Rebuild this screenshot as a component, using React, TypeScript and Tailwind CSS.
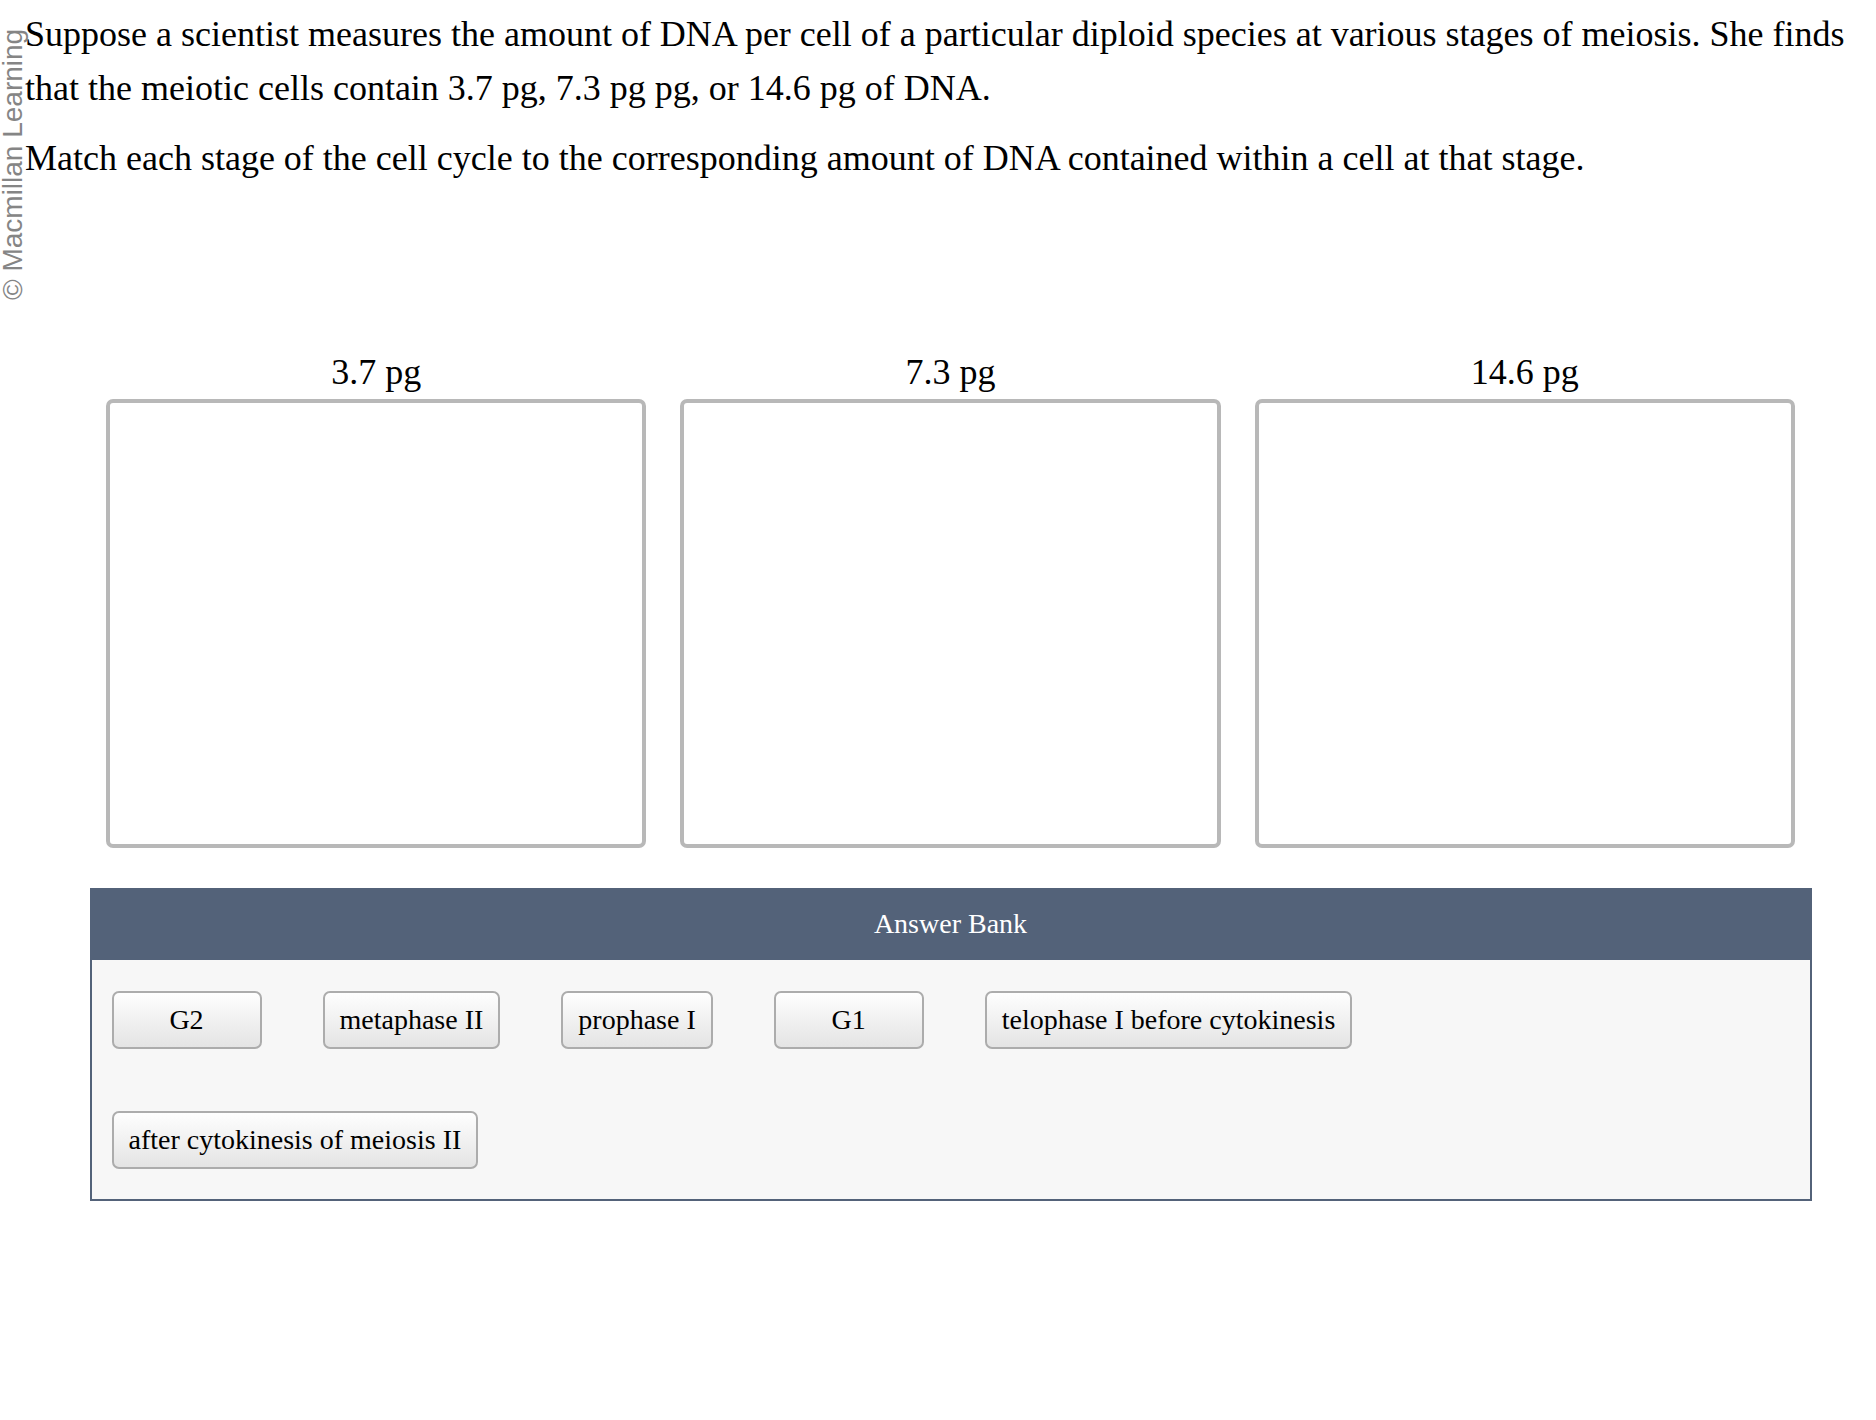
import React from "react";

const serif = { fontFamily: '"Liberation Serif", "Times New Roman", serif' };

const chips = [
  "G2",
  "metaphase II",
  "prophase I",
  "G1",
  "telophase I before cytokinesis",
  "after cytokinesis of meiosis II",
];

const labels = ["3.7 pg", "7.3 pg", "14.6 pg"];

export default function App() {
  return (
    <div className="relative min-h-[1420px] w-[1876px] bg-white text-black" style={serif}>
      <div
        className="absolute left-[0px] top-[300px] origin-top-left -rotate-90 whitespace-nowrap text-[28px] leading-[26px] text-[#858585]"
        style={{ fontFamily: '"Liberation Sans", Arial, sans-serif' }}
      >
        © Macmillan Learning
      </div>

      <div className="pl-[25px] pt-[7px]">
        <p className="text-[36px] leading-[54px]">
          Suppose a scientist measures the amount of DNA per cell of a particular diploid species at various stages of meiosis. She finds that the meiotic cells contain 3.7 pg, 7.3 pg pg, or 14.6 pg of DNA.
        </p>
        <p className="mt-[16px] text-[36px] leading-[54px]">
          Match each stage of the cell cycle to the corresponding amount of DNA contained within a cell at that stage.
        </p>

        <div className="mx-auto mt-[160px] grid w-[1689px] grid-cols-3 gap-x-[34px]">
          {labels.map((l) => (
            <div key={l} className="flex flex-col">
              <div className="text-center text-[36px] leading-[54px]">{l}</div>
              <div className="h-[449px] rounded-[7px] border-[4px] border-[#b8b8b8] bg-white" />
            </div>
          ))}
        </div>

        <div className="mx-auto mt-[40px] w-[1722px]">
          <div className="flex h-[72px] items-center justify-center bg-[#536279] text-[28px] text-white">
            Answer Bank
          </div>
          <div className="flex flex-wrap gap-y-[62px] border-x-2 border-b-2 border-[#536279] bg-[#f7f7f7] pb-[30px] pl-[20px] pr-[20px] pt-[31px]">
            {chips.map((c) => (
              <div
                key={c}
                className="mr-[61px] flex h-[58px] min-w-[150px] items-center justify-center whitespace-nowrap rounded-[7px] border-2 border-[#acacac] bg-linear-to-b from-[#fefefe] to-[#e4e4e4] px-[15px] text-[28px] leading-none"
              >
                {c}
              </div>
            ))}
          </div>
        </div>
      </div>
    </div>
  );
}
